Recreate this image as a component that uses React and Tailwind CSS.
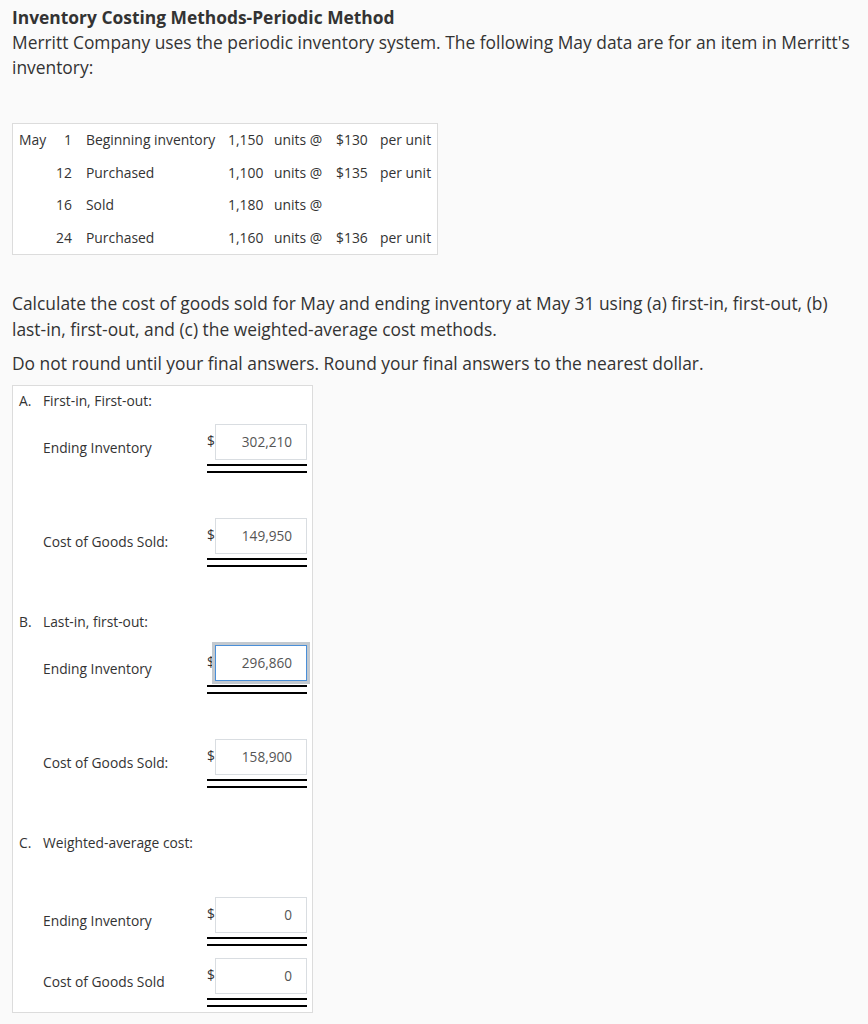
import React from 'react';

const rows = [
    { month: 'May', day: '1', desc: 'Beginning inventory', qty: '1,150', price: '$130', per: 'per unit' },
    { month: '', day: '12', desc: 'Purchased', qty: '1,100', price: '$135', per: 'per unit' },
    { month: '', day: '16', desc: 'Sold', qty: '1,180', price: '', per: '' },
    { month: '', day: '24', desc: 'Purchased', qty: '1,160', price: '$136', per: 'per unit' },
];

const AnswerRow = ({ label, value, focused, className = '' }) => (
    <div className={`flex items-start pl-[24px] ${className}`}>
        <div className="w-[164px] pt-[14px] leading-[20px]">{label}</div>
        <div className="w-[100px]">
            <div className="flex items-start">
                <span className="w-[8px] pt-[7px] leading-[20px] text-[#333]">$</span>
                <div
                    className={`w-[92px] h-[36px] flex items-center justify-end pr-[14px] bg-white text-[#555] text-[13.6px] ${
                        focused
                            ? 'border border-[#4a8fd8] ring-[3px] ring-[#c3c9cf]'
                            : 'border border-[#d9dde1]'
                    }`}
                >
                    {value}
                </div>
            </div>
            <div className="mt-[4px] h-[2px] bg-black" />
            <div className="mt-[5px] h-[2px] bg-black" />
        </div>
    </div>
);

const SectionTitle = ({ letter, text, className = '' }) => (
    <div className={`flex leading-[20px] ${className}`}>
        <span className="w-[24px]">{letter}</span>
        <span>{text}</span>
    </div>
);

const App = () => {
    return (
        <div className="min-h-screen bg-[#fafafa] text-[#333] font-['Open_Sans',sans-serif] px-[12px] pt-[5px] pb-[9px]">
            {/* Intro */}
            <h1 className="text-[17.4px] leading-[25px] font-bold">Inventory Costing Methods-Periodic Method</h1>
            <p className="text-[17.4px] leading-[25px] pr-[4px]">
                Merritt Company uses the periodic inventory system. The following May data are for an item in Merritt's inventory:
            </p>

            {/* Data table */}
            <div className="mt-[43px] w-[426px] border border-[#dcdcdc] bg-white text-[13.9px]">
                {rows.map((r, i) => (
                    <div key={i} className="flex leading-[20.5px] py-[6px]">
                        <div className="w-[39px] pl-[6px]">{r.month}</div>
                        <div className="w-[28px] pr-[8px] text-right">{r.day}</div>
                        <div className="w-[142px] pl-[6px]">{r.desc}</div>
                        <div className="w-[46px] pl-[6px]">{r.qty}</div>
                        <div className="w-[62px] pl-[6px] whitespace-nowrap">units @</div>
                        <div className="w-[44px] pl-[6px]">{r.price}</div>
                        <div className="w-[63px] pl-[6px] whitespace-nowrap">{r.per}</div>
                    </div>
                ))}
            </div>

            {/* Question */}
            <p className="mt-[35px] text-[17.4px] leading-[26px] pr-[20px]">
                Calculate the cost of goods sold for May and ending inventory at May 31 using (a) first-in, first-out, (b) last-in, first-out, and (c) the weighted-average cost methods.
            </p>
            <p className="mt-[8px] text-[17.4px] leading-[26px]">
                Do not round until your final answers. Round your final answers to the nearest dollar.
            </p>

            {/* Answer box */}
            <div className="mt-[9px] w-[301px] border border-[#dcdcdc] bg-white text-[13.8px] pl-[6px] pr-[5px] pt-[5px] pb-[5px]">
                <SectionTitle letter="A." text="First-in, First-out:" />
                <AnswerRow className="mt-[13px]" label="Ending Inventory" value="302,210" />
                <AnswerRow className="mt-[45px]" label="Cost of Goods Sold:" value="149,950" />

                <SectionTitle className="mt-[45px]" letter="B." text="Last-in, first-out:" />
                <AnswerRow className="mt-[13px]" label="Ending Inventory" value="296,860" focused />
                <AnswerRow className="mt-[45px]" label="Cost of Goods Sold:" value="158,900" />

                <SectionTitle className="mt-[45px]" letter="C." text="Weighted-average cost:" />
                <AnswerRow className="mt-[44px]" label="Ending Inventory" value="0" />
                <AnswerRow className="mt-[12px]" label="Cost of Goods Sold" value="0" />
            </div>
        </div>
    );
};

export default App;
